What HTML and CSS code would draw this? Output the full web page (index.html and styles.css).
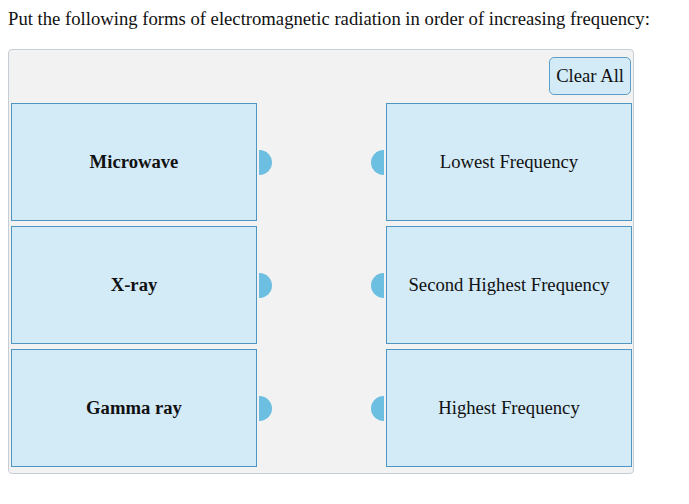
FILE: index.html
```html
<!DOCTYPE html>
<html lang="en">

<head>
  <meta charset="UTF-8" />
  <meta name="viewport" content="width=device-width, initial-scale=1.0" />
  <title>Matching Question</title>
  <link rel="stylesheet" href="styles.css">
</head>

<body>

  <p class="prompt">Put the following forms of electromagnetic radiation in order of increasing frequency:</p>

  <div class="match">
    <div class="toolbar">
      <button class="clear">Clear All</button>
    </div>

    <div class="pairs">
      <div class="item source">Microwave</div>
      <span class="dot dot-right"></span>
      <span></span>
      <span class="dot dot-left"></span>
      <div class="item target">Lowest Frequency</div>

      <div class="item source">X-ray</div>
      <span class="dot dot-right"></span>
      <span></span>
      <span class="dot dot-left"></span>
      <div class="item target">Second Highest Frequency</div>

      <div class="item source">Gamma ray</div>
      <span class="dot dot-right"></span>
      <span></span>
      <span class="dot dot-left"></span>
      <div class="item target">Highest Frequency</div>
    </div>
  </div>

</body>

</html>
```

FILE: styles.css
```css
* {
  box-sizing: border-box;
  margin: 0;
  padding: 0;
}

body {
  margin: 8px;
  font-family: "Liberation Serif", "Times New Roman", serif;
  font-size: 18.67px;
  color: #111;
  background: #fff;
}

.prompt {
  line-height: 21px;
  margin-bottom: 20px;
}

.match {
  width: 626px;
  background: #f2f2f2;
  border: 1px solid #c6cdd4;
  border-radius: 4px;
  padding: 7px 1px 6px 2px;
}

.toolbar {
  display: flex;
  justify-content: flex-end;
  margin-bottom: 8px;
  padding-right: 1px;
}

.clear {
  font-family: inherit;
  font-size: 18.67px;
  line-height: 20px;
  color: #111;
  background: #d3eaf7;
  border: 1px solid #5d9fc8;
  border-radius: 5px;
  padding: 8px 6px;
  cursor: pointer;
}

.pairs {
  display: grid;
  grid-template-columns: 246px 15px 1fr 15px 246px;
  grid-auto-rows: 118px;
  row-gap: 5px;
  align-items: center;
}

.item {
  height: 100%;
  display: flex;
  align-items: center;
  justify-content: center;
  text-align: center;
  background: #d3eaf7;
  border: 1px solid #4f97c2;
}

.source {
  font-weight: bold;
}

.dot {
  width: 13px;
  height: 25px;
  background: #6dbfe1;
}

.dot-right {
  margin-left: 2px;
  border-radius: 0 13px 13px 0;
}

.dot-left {
  justify-self: end;
  margin-right: 2px;
  border-radius: 13px 0 0 13px;
}
```
